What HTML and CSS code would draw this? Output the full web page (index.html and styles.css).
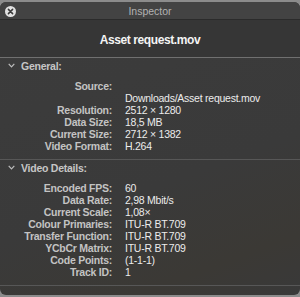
FILE: index.html
```html
<!DOCTYPE html>
<html lang="en">
<head>
    <meta charset="UTF-8">
    <meta name="viewport" content="width=device-width, initial-scale=1.0">
    <title>Inspector</title>
    <link rel="stylesheet" href="styles.css">
</head>
<body>
    <div class="window">
        <div class="titlebar">
            <div class="close-btn">
                <svg width="11" height="11" viewBox="0 0 11 11">
                    <circle cx="5.5" cy="5.5" r="5.5" fill="#e2e2e2"/>
                    <path d="M3.4 3.4 L7.6 7.6 M7.6 3.4 L3.4 7.6" stroke="#3a3a3a" stroke-width="1.5" stroke-linecap="round"/>
                </svg>
            </div>
            <div class="title">Inspector</div>
            <div></div>
        </div>

        <div class="file-name">Asset request.mov</div>

        <div class="section">
            <div class="section-header">
                <svg class="chevron" width="7" height="5" viewBox="0 0 7 5">
                    <path d="M0.7 0.8 L3.5 3.8 L6.3 0.8" fill="none" stroke="#bdbdbd" stroke-width="1.2"/>
                </svg>
                General:
            </div>
            <div class="details">
                <div class="label">Source:</div><div class="value"></div>
                <div class="label"></div><div class="value">Downloads/Asset request.mov</div>
                <div class="label">Resolution:</div><div class="value">2512 × 1280</div>
                <div class="label">Data Size:</div><div class="value">18,5 MB</div>
                <div class="label">Current Size:</div><div class="value">2712 × 1382</div>
                <div class="label">Video Format:</div><div class="value">H.264</div>
            </div>
        </div>

        <div class="section">
            <div class="section-header">
                <svg class="chevron" width="7" height="5" viewBox="0 0 7 5">
                    <path d="M0.7 0.8 L3.5 3.8 L6.3 0.8" fill="none" stroke="#bdbdbd" stroke-width="1.2"/>
                </svg>
                Video Details:
            </div>
            <div class="details">
                <div class="label">Encoded FPS:</div><div class="value">60</div>
                <div class="label">Data Rate:</div><div class="value">2,98 Mbit/s</div>
                <div class="label">Current Scale:</div><div class="value">1,08×</div>
                <div class="label">Colour Primaries:</div><div class="value">ITU-R BT.709</div>
                <div class="label">Transfer Function:</div><div class="value">ITU-R BT.709</div>
                <div class="label">YCbCr Matrix:</div><div class="value">ITU-R BT.709</div>
                <div class="label">Code Points:</div><div class="value">(1-1-1)</div>
                <div class="label">Track ID:</div><div class="value">1</div>
            </div>
        </div>
    </div>
</body>
</html>
```

FILE: styles.css
```css
html, body {
    margin: 0;
    padding: 0;
    background: #8c8c8c;
}
body {
    font-family: "Liberation Sans", Arial, sans-serif;
    width: 300px;
    height: 297px;
    overflow: hidden;
}
.window {
    margin-top: 2px;
    height: 293px;
    background: linear-gradient(160deg, #3c3c3c 0%, #3a3a3a 60%, #3b3935 85%, #393939 100%);
    border-radius: 6px;
    overflow: hidden;
}
.titlebar {
    display: grid;
    grid-template-columns: 20px 1fr 20px;
    align-items: center;
    height: 17px;
    background: #434343;
    border-bottom: 1px solid #2b2b2b;
}
.close-btn {
    display: flex;
    justify-content: center;
    padding-left: 1px;
    padding-top: 1px;
}
.title {
    text-align: center;
    font-size: 10.5px;
    color: #b2b2b2;
    padding-top: 1px;
}
.file-name {
    height: 34px;
    padding-top: 3px;
    display: flex;
    align-items: center;
    justify-content: center;
    font-size: 12px;
    font-weight: 700;
    letter-spacing: -0.4px;
    color: #f4f4f4;
    background: #363636;
    border-bottom: 1px solid #707070;
}
.section {
    border-bottom: 1px solid #575757;
    padding-bottom: 7px;
}
.section-header {
    display: flex;
    align-items: center;
    gap: 6px;
    padding-left: 8px;
    height: 15px;
    font-size: 10.5px;
    font-weight: 700;
    letter-spacing: -0.25px;
    color: #c6c6c6;
}
.details {
    display: grid;
    grid-template-columns: 112px 1fr;
    column-gap: 13px;
    padding-top: 7px;
    font-size: 10.5px;
    letter-spacing: -0.25px;
    line-height: 12px;
}
.label {
    text-align: right;
    font-weight: 700;
    color: #c3c3c3;
}
.value {
    color: #ececec;
    min-height: 12px;
}
```
